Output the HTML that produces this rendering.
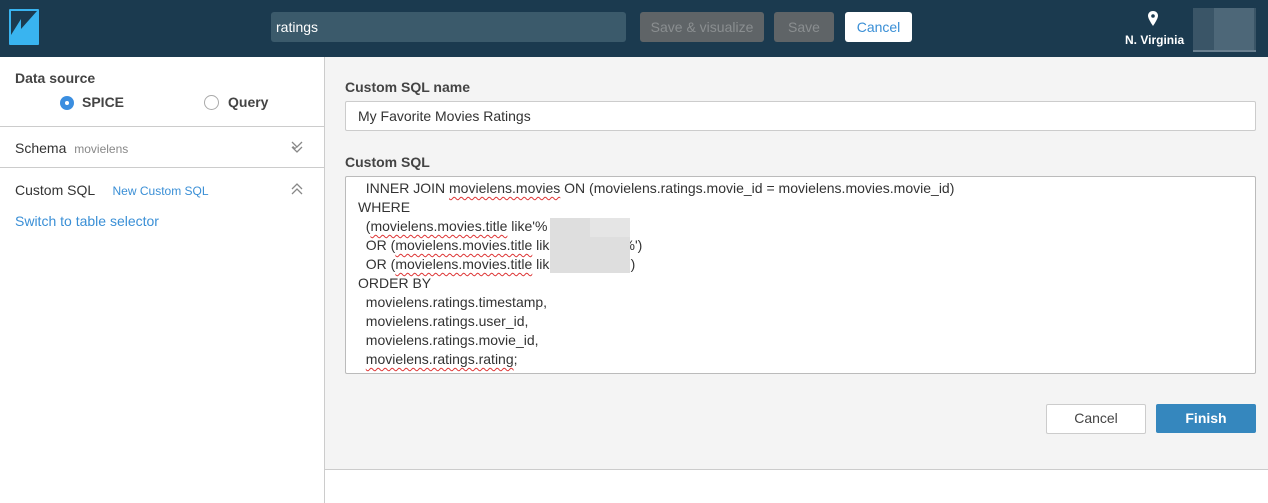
<!DOCTYPE html><html><head><style>
body{margin:0;width:1268px;height:503px;overflow:hidden;font-family:"Liberation Sans",sans-serif;background:#fff;position:relative}
.a{position:absolute}
.hdr{left:0;top:0;width:1268px;height:57px;background:#1b3a4f}
.btn{position:absolute;border-radius:3px;font-size:14px;text-align:center;line-height:30px;height:30px}
.sq{text-decoration:underline wavy #d33;text-decoration-thickness:1px;text-underline-offset:3px}
</style></head><body>
<div class="a hdr">
 <svg class="a" style="left:9px;top:9px" width="30" height="36" viewBox="0 0 30 36"><rect width="30" height="36" rx="1" fill="#39b4f0"/><path d="M2 2H28L12 20V10L2 26Z" fill="#1b3a4f"/></svg>
 <div class="a" style="left:271px;top:12px;width:355px;height:30px;background:#3b5a6b;border-radius:3px;color:#fff;font-size:14px;line-height:30px;padding-left:5px;box-sizing:border-box">ratings</div>
 <div class="btn" style="left:640px;top:12px;width:124px;background:#5f6467;color:#8a8e90">Save &amp; visualize</div>
 <div class="btn" style="left:774px;top:12px;width:60px;background:#5f6467;color:#8a8e90">Save</div>
 <div class="btn" style="left:845px;top:12px;width:67px;background:#fff;color:#3a8fd6">Cancel</div>
 <svg class="a" style="left:1147px;top:11px" width="12" height="16" viewBox="0 0 12 16"><path d="M6 0C2.7 0 1 2.4 1 4.8 1 8 6 15 6 15S11 8 11 4.8C11 2.4 9.3 0 6 0Z" fill="#fff"/><circle cx="6" cy="5" r="1.8" fill="#1b3a4f"/></svg>
 <div class="a" style="left:1125px;top:33px;font-size:12px;font-weight:bold;color:#fff">N. Virginia</div>
 <div class="a" style="left:1193px;top:8px;width:63px;height:42px;background:#3a5567"></div>
 <div class="a" style="left:1214px;top:8px;width:40px;height:42px;background:#4d6778"></div>
 <div class="a" style="left:1193px;top:50px;width:63px;height:2px;background:#6a8090"></div>
</div>
<div class="a" style="left:324px;top:57px;width:1px;height:446px;background:#ccc"></div>
<div class="a" style="left:325px;top:57px;width:943px;height:412px;background:#f4f4f4"></div>
<div class="a" style="left:325px;top:469px;width:943px;height:1px;background:#ccc"></div>
<div class="a" style="left:15px;top:70px;font-size:14px;font-weight:bold;color:#444">Data source</div>
<div class="a" style="left:60px;top:96px;width:14px;height:14px;border-radius:50%;background:#3b8ee0"></div>
<div class="a" style="left:65px;top:101px;width:4px;height:4px;border-radius:50%;background:#fff"></div>
<div class="a" style="left:82px;top:94px;font-size:14px;font-weight:bold;color:#444">SPICE</div>
<div class="a" style="left:204px;top:95px;width:13px;height:13px;border-radius:50%;border:1px solid #aaa"></div>
<div class="a" style="left:228px;top:94px;font-size:14px;font-weight:bold;color:#444">Query</div>
<div class="a" style="left:0;top:126px;width:324px;height:1px;background:#ccc"></div>
<div class="a" style="left:15px;top:140px;font-size:14px;color:#333">Schema <span style="font-size:12px;color:#888;margin-left:4px">movielens</span></div>
<div class="a" style="left:290px;top:138px;font-size:12px;color:#888">&#8964;</div>
<div class="a" style="left:0;top:167px;width:324px;height:1px;background:#ccc"></div>
<div class="a" style="left:15px;top:182px;font-size:14px;color:#333">Custom SQL <span style="font-size:12px;color:#3a8fd6;margin-left:14px">New Custom SQL</span></div>
<svg class="a" style="left:291px;top:183px" width="12" height="12" viewBox="0 0 12 12"><path d="M1 6L6 1 11 6M1 11L6 6 11 11" fill="none" stroke="#888" stroke-width="1.3"/></svg>
<svg class="a" style="left:291px;top:141px" width="12" height="12" viewBox="0 0 12 12"><path d="M1 1L6 6 11 1M1 6L6 11 11 6" fill="none" stroke="#888" stroke-width="1.3"/></svg>
<div class="a" style="left:15px;top:213px;font-size:14px;color:#3a8fd6">Switch to table selector</div>
<div class="a" style="left:345px;top:79px;font-size:14px;font-weight:bold;color:#444">Custom SQL name</div>
<div class="a" style="left:345px;top:101px;width:911px;height:30px;box-sizing:border-box;background:#fff;border:1px solid #ccc;border-radius:2px;font-size:14px;line-height:28px;padding-left:12px;color:#333">My Favorite Movies Ratings</div>
<div class="a" style="left:345px;top:154px;font-size:14px;font-weight:bold;color:#444">Custom SQL</div>
<div class="a" style="left:345px;top:176px;width:911px;height:198px;box-sizing:border-box;background:#fff;border:1px solid #bbb;border-radius:2px"></div>
<div class="a" style="left:358px;top:179px;font-size:14px;line-height:19px;color:#333;white-space:pre">  INNER JOIN <span class="sq">movielens.movies</span> ON (movielens.ratings.movie_id = movielens.movies.movie_id)
WHERE
  (<span class="sq">movielens.movies.title</span> like'%               )
  OR (<span class="sq">movielens.movies.title</span> lik                 x%')
  OR (<span class="sq">movielens.movies.title</span> lik                 %')
ORDER BY
  movielens.ratings.timestamp,
  movielens.ratings.user_id,
  movielens.ratings.movie_id,
  <span class="sq">movielens.ratings.rating</span>;</div>
<div class="a" style="left:550px;top:218px;width:80px;height:55px;background:#dedede"></div>
<div class="a" style="left:590px;top:218px;width:40px;height:19px;background:#e5e5e5"></div>
<div class="btn" style="left:1046px;top:404px;width:100px;background:#fff;border:1px solid #ccc;box-sizing:border-box;line-height:27px;color:#444;border-radius:2px">Cancel</div>
<div class="btn" style="left:1156px;top:404px;width:100px;background:#3587be;color:#fff;font-weight:bold;line-height:28px;height:29px;border-radius:2px">Finish</div>
</body></html>
